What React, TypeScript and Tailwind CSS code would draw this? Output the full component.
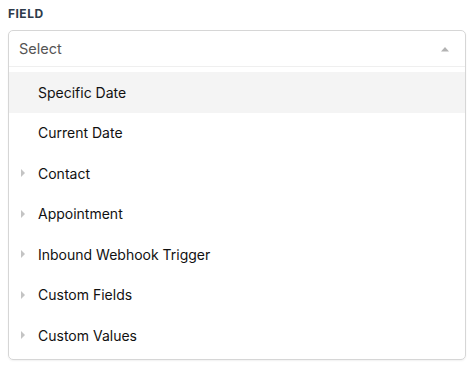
const options = [
  { label: 'Specific Date', group: false, active: true },
  { label: 'Current Date', group: false },
  { label: 'Contact', group: true },
  { label: 'Appointment', group: true },
  { label: 'Inbound Webhook Trigger', group: true },
  { label: 'Custom Fields', group: true },
  { label: 'Custom Values', group: true },
];

function Caret({ dir }: { dir: 'up' | 'right' }) {
  if (dir === 'up') {
    return (
      <svg width="10" height="6" viewBox="0 0 10 6" className="text-[#b3b3b3]">
        <path d="M1 5.5 L5 1 L9 5.5 Z" fill="currentColor" />
      </svg>
    );
  }
  return (
    <svg width="6" height="10" viewBox="0 0 6 10" className="text-[#c4c4c4]">
      <path d="M1 1 L5 5 L1 9 Z" fill="currentColor" />
    </svg>
  );
}

export default function App() {
  return (
    <div className="w-[474px] h-[365px] bg-white px-[8px] pt-[6px] font-['Inter','Noto_Sans',sans-serif]">
      <div className="text-[12px] font-bold tracking-[0.04em] text-[#2d3a4a] leading-[16px] h-[24px]">
        FIELD
      </div>
      <div className="w-[458px] h-[330px] rounded-[5px] border border-[#d6d6d6] shadow-[0_1px_2px_rgba(0,0,0,0.06)] overflow-hidden">
        <div className="flex items-center justify-between h-[36px] pl-[10px] pr-[15px] border-b border-[#efefef]">
          <span className="text-[14.5px] text-[#555]">Select</span>
          <Caret dir="up" />
        </div>
        <ul className="pt-[5px]">
          {options.map((o) => (
            <li
              key={o.label}
              className={`flex items-center h-[40.5px] pl-[11px] ${o.active ? 'bg-[#f4f4f4]' : ''}`}
            >
              <span className="w-[18px] flex items-center">
                {o.group && <Caret dir="right" />}
              </span>
              <span className="text-[14px] text-[#111]">{o.label}</span>
            </li>
          ))}
        </ul>
      </div>
    </div>
  );
}
